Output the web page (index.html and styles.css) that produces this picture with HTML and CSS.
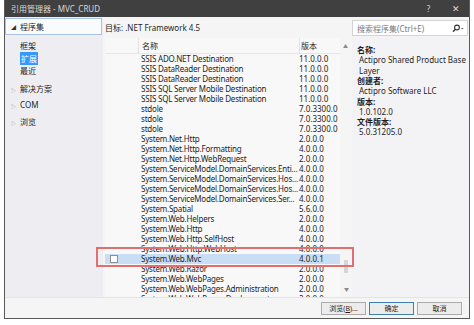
FILE: index.html
```html
<html>
<head>
    <meta charset="UTF-8"/>
    <title>引用管理器 - MVC_CRUD</title>
    <link rel="stylesheet" href="styles.css">
</head>
<body>
<div class="window">
    <div class="titlebar">
        <span class="title">引用管理器 - MVC_CRUD</span>
        <span class="tb_btn">?</span>
        <span class="tb_btn close">✕</span>
    </div>

    <div class="main">
        <div class="nav">
            <div class="nav_group open"><span class="arrow">◢</span>程序集</div>
            <div class="nav_sub">
                <div class="nav_item">框架</div>
                <div class="nav_item"><span class="active">扩展</span></div>
                <div class="nav_item">最近</div>
            </div>
            <div class="nav_node"><span class="arrow">▷</span>解决方案</div>
            <div class="nav_node"><span class="arrow">▷</span>COM</div>
            <div class="nav_node"><span class="arrow">▷</span>浏览</div>
        </div>

        <div class="center">
            <div class="target">目标: .NET Framework 4.5</div>
            <div class="list_wrap">
                <div class="list">
                    <div class="list_head">
                        <div class="col_chk"></div>
                        <div class="col_name">名称</div>
                        <div class="col_ver">版本</div>
                    </div>
                    <div class="rows" id="rows"></div>
                </div>
                <div class="scrollbar">
                    <span class="sb_up">▲</span>
                    <span class="sb_thumb"></span>
                    <span class="sb_down">▼</span>
                </div>
            </div>
        </div>

        <div class="side">
            <div class="search">
                <span class="search_hint">搜索程序集(Ctrl+E)</span>
                <svg class="search_icon" width="12" height="9" viewBox="0 0 12 9">
                    <circle cx="5" cy="3.5" r="2.4" fill="none" stroke="#333" stroke-width="1.1"/>
                    <line x1="3.3" y1="5.2" x2="1" y2="7.8" stroke="#333" stroke-width="1.3"/>
                    <path d="M9 4 L11.5 4 L10.25 5.5 Z" fill="#555"/>
                </svg>
            </div>
            <div class="details">
                <div class="d_label">名称:</div>
                <div class="d_value">Actipro Shared Product Base Layer</div>
                <div class="d_label">创建者:</div>
                <div class="d_value">Actipro Software LLC</div>
                <div class="d_label">版本:</div>
                <div class="d_value">1.0.102.0</div>
                <div class="d_label">文件版本:</div>
                <div class="d_value">5.0.31205.0</div>
            </div>
        </div>
    </div>

    <div class="footer">
        <button class="btn">浏览(<u>B</u>)...</button>
        <button class="btn btn_default">确定</button>
        <button class="btn">取消</button>
    </div>
</div>

<div class="mark"></div>

<script>
var assemblies = [
    ["SSIS ADO.NET Destination", "11.0.0.0"],
    ["SSIS DataReader Destination", "11.0.0.0"],
    ["SSIS DataReader Destination", "11.0.0.0"],
    ["SSIS SQL Server Mobile Destination", "11.0.0.0"],
    ["SSIS SQL Server Mobile Destination", "11.0.0.0"],
    ["stdole", "7.0.3300.0"],
    ["stdole", "7.0.3300.0"],
    ["stdole", "7.0.3300.0"],
    ["System.Net.Http", "2.0.0.0"],
    ["System.Net.Http.Formatting", "4.0.0.0"],
    ["System.Net.Http.WebRequest", "2.0.0.0"],
    ["System.ServiceModel.DomainServices.Enti...", "4.0.0.0"],
    ["System.ServiceModel.DomainServices.Hos...", "4.0.0.0"],
    ["System.ServiceModel.DomainServices.Hos...", "4.0.0.0"],
    ["System.ServiceModel.DomainServices.Ser...", "4.0.0.0"],
    ["System.Spatial", "5.6.0.0"],
    ["System.Web.Helpers", "2.0.0.0"],
    ["System.Web.Http", "4.0.0.0"],
    ["System.Web.Http.SelfHost", "4.0.0.0"],
    ["System.Web.Http.WebHost", "4.0.0.0"],
    ["System.Web.Mvc", "4.0.0.1"],
    ["System.Web.Razor", "2.0.0.0"],
    ["System.Web.WebPages", "2.0.0.0"],
    ["System.Web.WebPages.Administration", "2.0.0.0"],
    ["System.Web.WebPages.Deployment", "2.0.0.0"]
];
var html = "";
for (var i = 0; i < assemblies.length; i++) {
    var sel = assemblies[i][0] == "System.Web.Mvc";
    html += '<div class="row' + (sel ? ' selected' : '') + '">' +
        '<div class="col_chk">' + (sel ? '<span class="chk"></span>' : '') + '</div>' +
        '<div class="col_name">' + assemblies[i][0] + '</div>' +
        '<div class="col_ver">' + assemblies[i][1] + '</div></div>';
}
document.getElementById("rows").innerHTML = html;
</script>
</body>
</html>
```

FILE: styles.css
```css
body {
    margin: 0;
    background: #ffffff;
    font-family: "Noto Sans", "Noto Sans CJK SC", sans-serif;
    font-size: 8px;
    color: #1e1e1e;
    width: 474px;
    height: 325px;
    overflow: hidden;
    position: relative;
}

.window {
    margin-left: 4px;
    width: 466px;
    height: 319px;
    box-sizing: border-box;
    border: 1px solid #5a5a5a;
    border-top: none;
    background: #f5f5f5;
    display: flex;
    flex-direction: column;
}

.titlebar {
    height: 17px;
    background: #404040;
    color: #d8d8d8;
    display: flex;
    align-items: center;
    padding-left: 6px;
}

.title {
    flex: 1;
}

.tb_btn {
    width: 27px;
    text-align: center;
    font-size: 8px;
}

.tb_btn.close {
    font-size: 9px;
}

.main {
    flex: 1;
    display: flex;
    min-height: 0;
}

/* left navigation */
.nav {
    width: 98px;
    background: #eeeef2;
}

.nav_group {
    height: 15px;
    margin-top: 1px;
    margin-right: 1px;
    border: 1px solid #a8c4e8;
    background: #fafbfd;
    display: flex;
    align-items: center;
    padding-left: 5px;
}

.arrow {
    display: inline-block;
    width: 9px;
    font-size: 5px;
    color: #333;
}

.nav_node .arrow {
    color: #888;
}

.nav_sub {
    padding: 5px 0 0 15px;
}

.nav_item {
    height: 12.5px;
    line-height: 12.5px;
}

.active {
    background: #3399ff;
    color: #ffffff;
    padding: 1px 1px;
}

.nav_node {
    height: 16.5px;
    line-height: 16.5px;
    padding-left: 6px;
}

.nav_sub + .nav_node {
    margin-top: 3px;
}

/* centre list */
.center {
    width: 249px;
    display: flex;
    flex-direction: column;
}

.target {
    height: 21px;
    line-height: 21px;
    padding-left: 2px;
}

.list_wrap {
    flex: 1;
    display: flex;
    overflow: hidden;
}

.list {
    flex: 1;
    margin-left: 2px;
    background: #f8f8f8;
    overflow: hidden;
}

.list_head {
    display: flex;
    height: 15px;
    line-height: 15px;
    border-bottom: 1px solid #e6e6e6;
}

.list_head .col_chk,
.list_head .col_name {
    border-right: 1px solid #e2e2e2;
}

.row {
    display: flex;
    height: 10px;
    line-height: 10px;
}

.row .col_name {
    letter-spacing: -0.2px;
}

.row.selected {
    background: #c9ddf4;
}

.col_chk {
    width: 33px;
    position: relative;
}

.col_name {
    width: 157px;
    padding-left: 3px;
    white-space: nowrap;
    overflow: hidden;
}

.col_ver {
    flex: 1;
    padding-left: 1px;
}

.chk {
    position: absolute;
    left: 5px;
    top: 1px;
    width: 6px;
    height: 6px;
    border: 1px solid #8f8f8f;
    background: #ffffff;
}

.scrollbar {
    width: 12px;
    position: relative;
    color: #8a8a8a;
    font-size: 5px;
}

.sb_up {
    position: absolute;
    top: 4px;
    left: 3px;
}

.sb_down {
    position: absolute;
    bottom: 5px;
    left: 4px;
}

.sb_thumb {
    position: absolute;
    top: 222px;
    left: 4px;
    width: 4px;
    height: 13px;
    background: #d6d6d6;
}

/* right details */
.side {
    flex: 1;
    display: flex;
    flex-direction: column;
    background: #f3f3f6;
}

.search {
    height: 14px;
    margin: 3px 1px 3px 0;
    background: #ffffff;
    border: 1px solid #d4d4d4;
    display: flex;
    align-items: center;
    padding-left: 4px;
}

.search_hint {
    flex: 1;
    color: #7a7a7a;
}

.search_icon {
    margin-right: 3px;
}

.details {
    padding: 6px 0 0 5px;
}

.d_label {
    font-weight: bold;
    line-height: 10px;
}

.d_value {
    padding-left: 2px;
    line-height: 10.5px;
    width: 108px;
}

/* bottom buttons */
.footer {
    height: 20px;
    display: flex;
    justify-content: flex-end;
    align-items: center;
    gap: 3px;
    padding-right: 7px;
    border-top: 1px solid #e4e4e4;
    background: #f5f5f5;
}

.btn {
    width: 45px;
    height: 13px;
    padding: 0;
    font-family: "Noto Sans", "Noto Sans CJK SC", sans-serif;
    font-size: 7px;
    color: #1e1e1e;
    background: #ececec;
    border: 1px solid #acacac;
}

.btn_default {
    border-color: #3c7fb1;
}

.mark {
    position: absolute;
    left: 96px;
    top: 247px;
    width: 254px;
    height: 16px;
    border: 2px solid #e07070;
}
```
